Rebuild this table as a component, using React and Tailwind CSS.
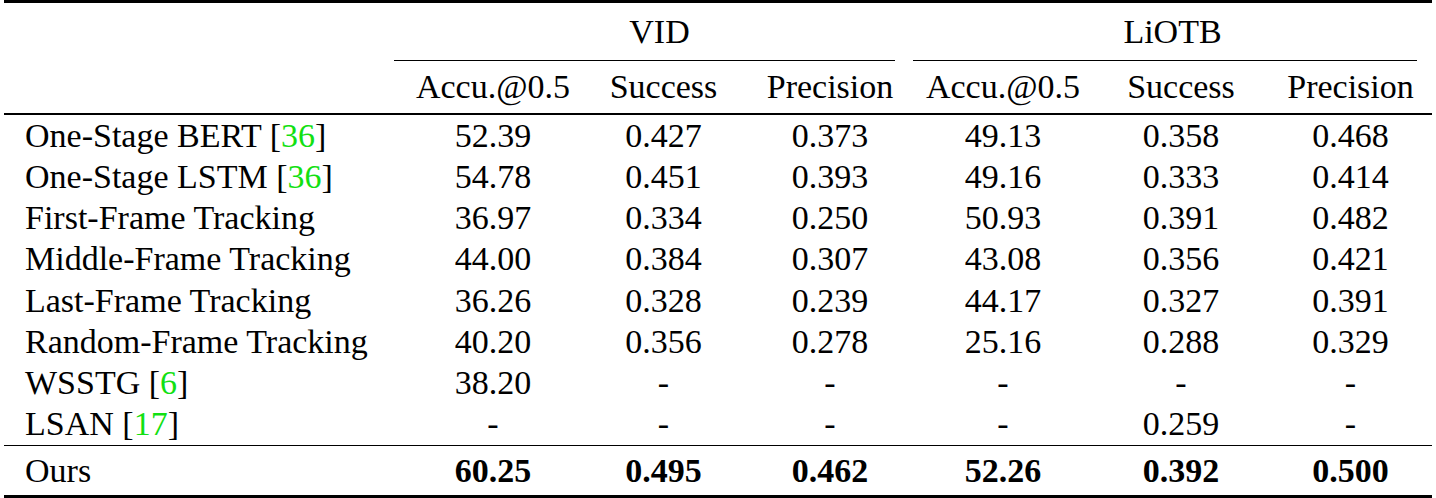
const rows = [
  { name: "One-Stage BERT", cite: "36", vals: ["52.39", "0.427", "0.373", "49.13", "0.358", "0.468"] },
  { name: "One-Stage LSTM", cite: "36", vals: ["54.78", "0.451", "0.393", "49.16", "0.333", "0.414"] },
  { name: "First-Frame Tracking", vals: ["36.97", "0.334", "0.250", "50.93", "0.391", "0.482"] },
  { name: "Middle-Frame Tracking", vals: ["44.00", "0.384", "0.307", "43.08", "0.356", "0.421"] },
  { name: "Last-Frame Tracking", vals: ["36.26", "0.328", "0.239", "44.17", "0.327", "0.391"] },
  { name: "Random-Frame Tracking", vals: ["40.20", "0.356", "0.278", "25.16", "0.288", "0.329"] },
  { name: "WSSTG", cite: "6", vals: ["38.20", "-", "-", "-", "-", "-"] },
  { name: "LSAN", cite: "17", vals: ["-", "-", "-", "-", "0.259", "-"] },
];

const ours = ["60.25", "0.495", "0.462", "52.26", "0.392", "0.500"];

const cols = "grid grid-cols-[402px_174px_167px_166px_180px_176px_163px]";

function Name({ name, cite }) {
  return (
    <div className="pl-[21px] whitespace-nowrap">
      {name}
      {cite && (
        <>
          {" "}[<span className="text-[#12e012]">{cite}</span>]
        </>
      )}
    </div>
  );
}

function Row({ name, cite, vals, bold, height }) {
  return (
    <div className={`${cols} items-center ${height}`}>
      <Name name={name} cite={cite} />
      {vals.map((v, i) => (
        <div key={i} className={`text-center ${bold ? "font-bold" : ""}`}>
          {v}
        </div>
      ))}
    </div>
  );
}

export default function App() {
  return (
    <div className="w-[1436px] h-[498px] bg-white overflow-hidden">
      <div
        className="ml-[4px] w-[1428px] text-[34px] leading-none text-black"
        style={{ fontFamily: '"Liberation Serif", "Times New Roman", serif' }}
      >
        {/* toprule */}
        <div className="h-[3px] bg-black" />

        {/* dataset headers */}
        <div className={`${cols} items-center h-[57px]`}>
          <div />
          <div className="col-span-3 text-center">VID</div>
          <div className="col-span-3 text-center">LiOTB</div>
        </div>

        {/* cmidrules */}
        <div className="flex h-px">
          <div className="w-[390px]" />
          <div className="w-[501px] bg-black" />
          <div className="w-[18px]" />
          <div className="w-[504px] bg-black" />
        </div>

        {/* metric headers */}
        <div className={`${cols} items-center h-[52px]`}>
          <div />
          {["Accu.@0.5", "Success", "Precision", "Accu.@0.5", "Success", "Precision"].map((h, i) => (
            <div key={i} className="text-center">{h}</div>
          ))}
        </div>

        {/* midrule */}
        <div className="h-[2px] bg-black" />

        {rows.map((r, i) => (
          <Row key={i} {...r} height="h-[41.25px]" />
        ))}

        <div className="h-px bg-black" />

        <Row name="Ours" vals={ours} bold height="h-[49px]" />

        {/* bottomrule */}
        <div className="h-[3px] bg-black" />
      </div>
    </div>
  );
}
